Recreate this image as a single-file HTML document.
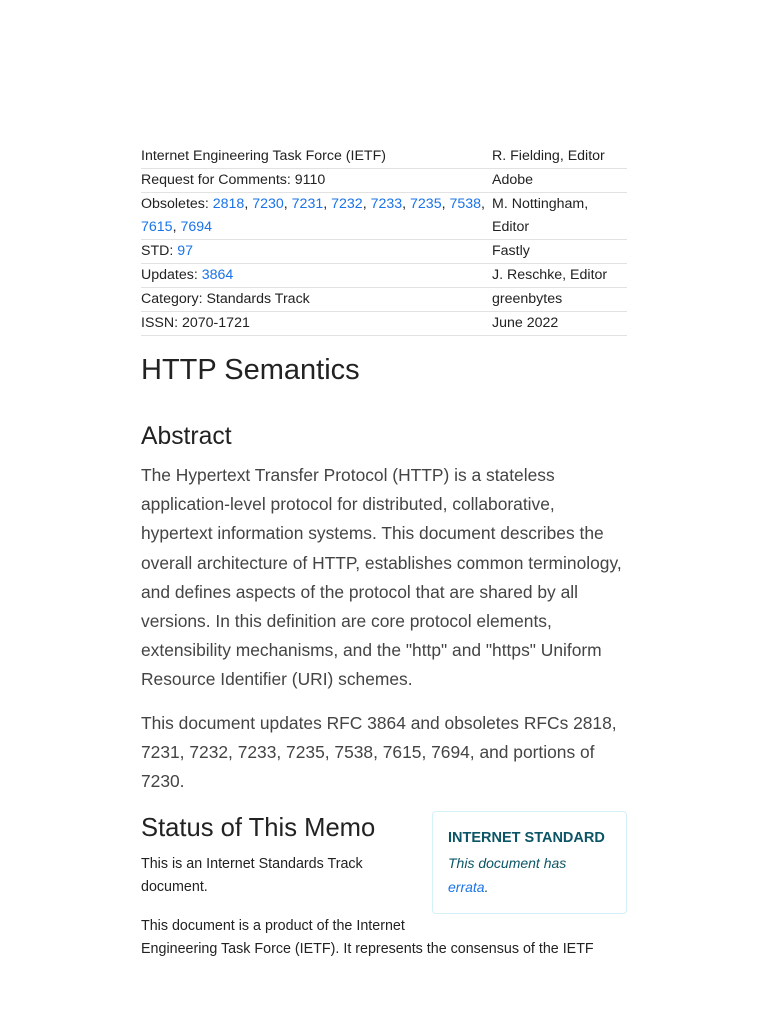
<!DOCTYPE html>
<html><head><meta charset="utf-8"><style>
body{margin:0;background:#fff;font-family:"Liberation Sans",sans-serif;color:#222;}
table{border-collapse:collapse;width:486px;font-size:14.2px;position:absolute;left:141px;top:145px;table-layout:fixed}
td{border-bottom:1px solid #e2e2e2;height:23px;padding:0;vertical-align:middle;line-height:23px;white-space:nowrap;overflow:visible}
td.c1{width:351px}
a{color:#1a73e8;text-decoration:none}
.l{position:absolute;left:141px;white-space:nowrap}
h1{font-weight:normal;font-size:29px;margin:0;position:absolute;left:141px;top:354px;color:#222}
h2{font-weight:normal;margin:0;position:absolute;left:141px;color:#222}
.p{position:absolute;left:141px;font-size:17.4px;line-height:29.2px;color:#444;white-space:nowrap}
.s{position:absolute;left:141px;font-size:14.3px;line-height:23px;color:#222;white-space:nowrap}
.box{position:absolute;left:432px;top:811px;width:193px;height:101px;border:1px solid #d4f0f8;border-radius:4px}
</style></head><body>
<table>
<tr><td class="c1">Internet Engineering Task Force (IETF)</td><td>R. Fielding, Editor</td></tr>
<tr><td>Request for Comments: 9110</td><td>Adobe</td></tr>
<tr><td style="border:0">Obsoletes: <a>2818</a>, <a>7230</a>, <a>7231</a>, <a>7232</a>, <a>7233</a>, <a>7235</a>, <a>7538</a>,</td><td style="border:0">M. Nottingham,</td></tr>
<tr><td><a>7615</a>, <a>7694</a></td><td>Editor</td></tr>
<tr><td>STD: <a>97</a></td><td>Fastly</td></tr>
<tr><td>Updates: <a>3864</a></td><td>J. Reschke, Editor</td></tr>
<tr><td>Category: Standards Track</td><td>greenbytes</td></tr>
<tr><td>ISSN: 2070-1721</td><td>June 2022</td></tr>
</table>
<h1>HTTP Semantics</h1>
<h2 style="top:423px;font-size:24.7px">Abstract</h2>
<div class="p" style="top:461px">The Hypertext Transfer Protocol (HTTP) is a stateless<br>application-level protocol for distributed, collaborative,<br>hypertext information systems. This document describes the<br>overall architecture of HTTP, establishes common terminology,<br>and defines aspects of the protocol that are shared by all<br>versions. In this definition are core protocol elements,<br>extensibility mechanisms, and the "http" and "https" Uniform<br>Resource Identifier (URI) schemes.</div>
<div class="p" style="top:709px">This document updates RFC 3864 and obsoletes RFCs 2818,<br>7231, 7232, 7233, 7235, 7538, 7615, 7694, and portions of<br>7230.</div>
<h2 style="top:814px;font-size:25.6px">Status of This Memo</h2>
<div class="s" style="top:853px">This is an Internet Standards Track<br>document.</div>
<div class="s" style="top:915px">This document is a product of the Internet<br>Engineering Task Force (IETF). It represents the consensus of the IETF</div>
<div class="box"></div>
<div class="l" style="left:448px;top:830px;font-size:14.5px;font-weight:bold;color:#0b5566">INTERNET STANDARD</div>
<div class="l" style="left:448px;top:851px;font-size:14px;line-height:24px;font-style:italic;color:#0b5566">This document has<br><a>errata</a>.</div>
</body></html>
